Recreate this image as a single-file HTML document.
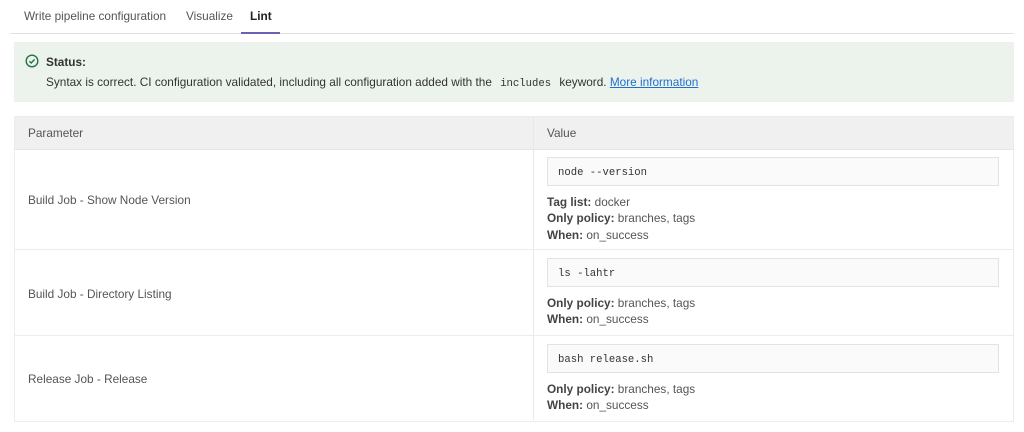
<!DOCTYPE html>
<html><head><style>
body{margin:0;background:#fff;font-family:"Liberation Sans",sans-serif;font-size:11.8px;color:#333;width:1024px;height:432px;position:relative;overflow:hidden}
.abs{position:absolute}
.tab{position:absolute;top:9px;color:#555;font-size:11.8px}
.mono{font-family:"Liberation Mono",monospace;font-size:10.6px}
.code{position:absolute;left:547px;width:452px;height:29px;background:#fafafa;border:1px solid #e3e3e3;box-sizing:border-box}
.code span{position:absolute;left:10px;top:8px;color:#333}
.info{position:absolute;left:547px;color:#555;line-height:16.3px}
.info b{color:#444}
.lbl{position:absolute;left:28px;color:#555}
.hr{position:absolute;left:14px;width:1000px;height:1px;background:#ececec}
</style></head><body>
<div class="tab" style="left:24px">Write pipeline configuration</div>
<div class="tab" style="left:186px">Visualize</div>
<div class="tab" style="left:250px;color:#222;font-weight:bold">Lint</div>
<div class="abs" style="left:10px;top:33px;width:1004px;height:1px;background:#e2e2e2"></div>
<div class="abs" style="left:241px;top:32px;width:39px;height:2px;background:#6a60b5"></div>

<div class="abs" style="left:14px;top:42px;width:1000px;height:60px;background:#ecf3ed"></div>
<svg class="abs" style="left:25px;top:54px" width="14" height="14" viewBox="0 0 14 14"><circle cx="7" cy="7" r="5.8" fill="none" stroke="#217645" stroke-width="1.4"/><path d="M4.4 7.2l1.8 1.8 3.4-3.6" fill="none" stroke="#217645" stroke-width="1.4"/></svg>
<div class="abs" style="left:46px;top:55px;font-weight:bold;color:#333">Status:</div>
<div class="abs" style="left:46px;top:75px;color:#333">Syntax is correct. CI configuration validated, including all configuration added with the <span class="mono" style="padding:0 5px">includes</span> keyword. <span style="color:#1f6fd0;text-decoration:underline">More information</span></div>

<div class="abs" style="left:14px;top:116px;width:998px;height:304px;border:1px solid #ececec"></div>
<div class="abs" style="left:15px;top:117px;width:998px;height:32px;background:#f0f0f0;border-bottom:1px solid #e6e6e6"></div>
<div class="abs" style="left:533px;top:117px;width:1px;height:303px;background:#e8e8e8"></div>
<div class="abs" style="left:28px;top:126px;color:#555">Parameter</div>
<div class="abs" style="left:547px;top:126px;color:#555">Value</div>

<div class="code" style="top:157px"><span class="mono" style="top:9px">node --version</span></div>
<div class="lbl" style="top:193px">Build Job - Show Node Version</div>
<div class="info" style="top:194px"><b>Tag list:</b> docker<br><b>Only policy:</b> branches, tags<br><b>When:</b> on_success</div>
<div class="hr" style="top:249px"></div>

<div class="code" style="top:258px"><span class="mono" style="top:9px">ls -lahtr</span></div>
<div class="lbl" style="top:287px">Build Job - Directory Listing</div>
<div class="info" style="top:295px"><b>Only policy:</b> branches, tags<br><b>When:</b> on_success</div>
<div class="hr" style="top:335px"></div>

<div class="code" style="top:344px"><span class="mono" style="top:9px">bash release.sh</span></div>
<div class="lbl" style="top:372px">Release Job - Release</div>
<div class="info" style="top:381px"><b>Only policy:</b> branches, tags<br><b>When:</b> on_success</div>
</body></html>
